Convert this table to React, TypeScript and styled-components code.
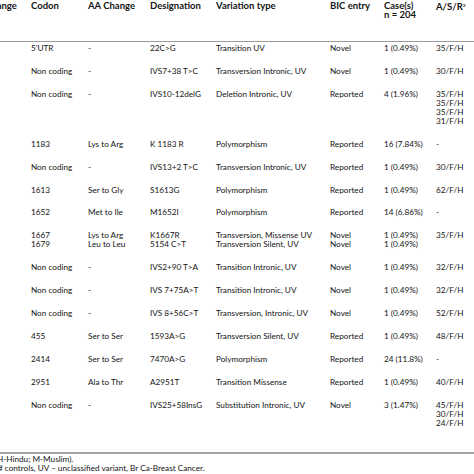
import styled, { createGlobalStyle } from "styled-components";

const GlobalStyle = createGlobalStyle`
  html, body {
    margin: 0;
    padding: 0;
    background: #ffffff;
  }
  body {
    font-family: Lato, "Liberation Sans", sans-serif;
    color: #141414;
  }
`;

type Row = {
  codon: string[];
  aa: string[];
  designation: string[];
  variation: string[];
  bic: string[];
  cases: string[];
  asr: string[];
};

const rows: Row[] = [
  { codon: ["5'UTR"], aa: ["-"], designation: ["22C>G"], variation: ["Transition UV"], bic: ["Novel"], cases: ["1 (0.49%)"], asr: ["35/F/H"] },
  { codon: ["Non coding"], aa: ["-"], designation: ["IVS7+38 T>C"], variation: ["Transversion Intronic, UV"], bic: ["Novel"], cases: ["1 (0.49%)"], asr: ["30/F/H"] },
  { codon: ["Non coding"], aa: ["-"], designation: ["IVS10-12delG"], variation: ["Deletion Intronic, UV"], bic: ["Reported"], cases: ["4 (1.96%)"], asr: ["35/F/H", "35/F/H", "35/F/H", "31/F/H"] },
  { codon: ["1183"], aa: ["Lys to Arg"], designation: ["K 1183 R"], variation: ["Polymorphism"], bic: ["Reported"], cases: ["16 (7.84%)"], asr: ["-"] },
  { codon: ["Non coding"], aa: ["-"], designation: ["IVS13+2 T>C"], variation: ["Transversion Intronic, UV"], bic: ["Reported"], cases: ["1 (0.49%)"], asr: ["30/F/H"] },
  { codon: ["1613"], aa: ["Ser to Gly"], designation: ["S1613G"], variation: ["Polymorphism"], bic: ["Reported"], cases: ["1 (0.49%)"], asr: ["62/F/H"] },
  { codon: ["1652"], aa: ["Met to Ile"], designation: ["M1652I"], variation: ["Polymorphism"], bic: ["Reported"], cases: ["14 (6.86%)"], asr: ["-"] },
  { codon: ["1667", "1679"], aa: ["Lys to Arg", "Leu to Leu"], designation: ["K1667R", "5154 C>T"], variation: ["Transversion, Missense UV", "Transversion Silent, UV"], bic: ["Novel", "Novel"], cases: ["1 (0.49%)", "1 (0.49%)"], asr: ["35/F/H"] },
  { codon: ["Non coding"], aa: ["-"], designation: ["IVS2+90 T>A"], variation: ["Transition Intronic, UV"], bic: ["Novel"], cases: ["1 (0.49%)"], asr: ["32/F/H"] },
  { codon: ["Non coding"], aa: ["-"], designation: ["IVS 7+75A>T"], variation: ["Transition Intronic, UV"], bic: ["Novel"], cases: ["1 (0.49%)"], asr: ["32/F/H"] },
  { codon: ["Non coding"], aa: ["-"], designation: ["IVS 8+56C>T"], variation: ["Transversion, Intronic, UV"], bic: ["Novel"], cases: ["1 (0.49%)"], asr: ["52/F/H"] },
  { codon: ["455"], aa: ["Ser to Ser"], designation: ["1593A>G"], variation: ["Transversion Silent, UV"], bic: ["Reported"], cases: ["1 (0.49%)"], asr: ["48/F/H"] },
  { codon: ["2414"], aa: ["Ser to Ser"], designation: ["7470A>G"], variation: ["Polymorphism"], bic: ["Reported"], cases: ["24 (11.8%)"], asr: ["-"] },
  { codon: ["2951"], aa: ["Ala to Thr"], designation: ["A2951T"], variation: ["Transition Missense"], bic: ["Reported"], cases: ["1 (0.49%)"], asr: ["40/F/H"] },
  { codon: ["Non coding"], aa: ["-"], designation: ["IVS25+58InsG"], variation: ["Substitution Intronic, UV"], bic: ["Novel"], cases: ["3 (1.47%)"], asr: ["45/F/H", "30/F/H", "24/F/H"] },
];

const widths = [51, 57, 62, 66, 114, 54, 52, 40];

const Lines = ({ items }: { items: string[] }) => (
  <>
    {items.map((t, i) => (
      <Line key={i}>{t}</Line>
    ))}
  </>
);

export default function App() {
  return (
    <Page>
      <GlobalStyle />
      <Clip>
        <Table>
          <colgroup>
            {widths.map((w, i) => (
              <col key={i} style={{ width: w }} />
            ))}
          </colgroup>
          <thead>
            <tr>
              <Th $indent={5}>Change</Th>
              <Th>Codon</Th>
              <Th>AA Change</Th>
              <Th>Designation</Th>
              <Th>Variation type</Th>
              <Th>BIC entry</Th>
              <Th>
                <Line>Case(s)</Line>
                <Line>n = 204</Line>
              </Th>
              <Th>
                A/S/R<Sup>a</Sup>
              </Th>
            </tr>
          </thead>
          <tbody>
            {rows.map((r, i) => (
              <Tr key={i} $last={i === rows.length - 1}>
                <Td />
                <Td><Lines items={r.codon} /></Td>
                <Td><Lines items={r.aa} /></Td>
                <Td><Lines items={r.designation} /></Td>
                <Td><Lines items={r.variation} /></Td>
                <Td><Lines items={r.bic} /></Td>
                <Td><Lines items={r.cases} /></Td>
                <Td><Lines items={r.asr} /></Td>
              </Tr>
            ))}
          </tbody>
        </Table>
        <Footnote>
          <Note $shift={-3}>H-Hindu; M-Muslim).</Note>
          <Note $shift={-2}># controls, UV – unclassified variant, Br Ca-Breast Cancer.</Note>
        </Footnote>
      </Clip>
    </Page>
  );
}

const Page = styled.div`
  width: 474px;
  height: 474px;
  overflow: hidden;
  background: #ffffff;
`;

const Clip = styled.div`
  width: 474px;
  overflow: hidden;
`;

const Table = styled.table`
  table-layout: fixed;
  border-collapse: collapse;
  width: 496px;
  margin-left: -20px;
  font-size: 8.2px;
  border-bottom: 2px solid #a3a3a3;
`;

const Th = styled.th<{ $indent?: number }>`
  text-align: left;
  vertical-align: top;
  font-weight: 700;
  font-size: 9.5px;
  line-height: 9px;
  height: 41px;
  padding: 0.5px 0 0 ${(p) => p.$indent ?? 0}px;
  box-sizing: border-box;
  border-bottom: 1.5px solid #9c9c9c;
  white-space: nowrap;
`;

const Tr = styled.tr<{ $last?: boolean }>`
  td {
    padding-bottom: ${(p) => (p.$last ? "24px" : "11.5px")};
  }
`;

const Td = styled.td`
  vertical-align: top;
  padding: 2.7px 0 11.5px 0;
  line-height: 8.8px;
  white-space: nowrap;
`;

const Line = styled.div`
  display: block;
`;

const Sup = styled.span`
  font-size: 5.5px;
  vertical-align: 3px;
  font-weight: 400;
`;

const Footnote = styled.div`
  padding-top: 1px;
  font-size: 8.2px;
  line-height: 9.4px;
`;

const Note = styled.div<{ $shift: number }>`
  margin-left: ${(p) => p.$shift}px;
  white-space: nowrap;
`;
